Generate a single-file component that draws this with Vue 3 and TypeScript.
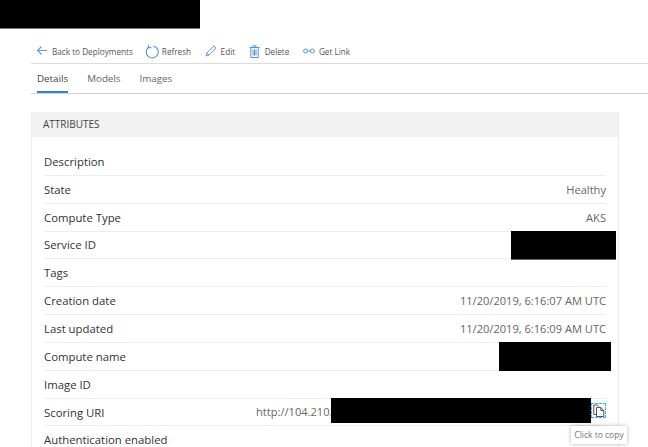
<script setup lang="ts">
interface Row { label: string; value?: string; redact?: 'service' | 'compute'; uri?: boolean }
const rows: Row[] = [
  { label: 'Description' },
  { label: 'State', value: 'Healthy' },
  { label: 'Compute Type', value: 'AKS' },
  { label: 'Service ID', redact: 'service' },
  { label: 'Tags' },
  { label: 'Creation date', value: '11/20/2019, 6:16:07 AM UTC' },
  { label: 'Last updated', value: '11/20/2019, 6:16:09 AM UTC' },
  { label: 'Compute name', redact: 'compute' },
  { label: 'Image ID' },
  { label: 'Scoring URI', uri: true },
  { label: 'Authentication enabled', value: 'true' },
]
</script>

<template>
  <div class="page">
    <div class="topblock"></div>
    <div class="content">
      <nav class="toolbar">
        <button class="tool back">
          <svg width="12" height="12" viewBox="0 0 12 12" fill="none" stroke="#5a9bd8" stroke-width="1.1"><path d="M4.500 1.500 0.500 5.500l4 4M0.500 5.500h9.500" /></svg>
          <span>Back to Deployments</span>
        </button>
        <button class="tool refresh">
          <svg width="14" height="15" viewBox="0 0 14 15" fill="none" stroke="#4f96d6" stroke-width="1.1"><path d="M3.600 3.200A6 6 0 1 0 8.600 2.100" /><path d="M3.400 0.800v2.800h2.800" /></svg>
          <span>Refresh</span>
        </button>
        <button class="tool edit">
          <svg width="12" height="12" viewBox="0 0 12 12" fill="none" stroke="#5a9bd8" stroke-width="1"><path d="M1 11l.8-3L9 .9l2.100 2.100L4 10.200z" /><path d="M1.800 8 4 10.200" /></svg>
          <span>Edit</span>
        </button>
        <button class="tool delete">
          <svg width="11" height="13" viewBox="0 0 11 13" fill="none" stroke="#4f96d6" stroke-width="1"><path d="M0.500 2.500h10M4 2.500V.8h3v1.700M1.800 2.500v10h7.400v-10M4 4.500v6M5.500 4.500v6M7 4.500v6" /></svg>
          <span>Delete</span>
        </button>
        <button class="tool link">
          <svg width="12" height="6" viewBox="0 0 12 6" fill="none" stroke="#4f96d6" stroke-width="1"><circle cx="2.600" cy="3" r="2" /><circle cx="9.400" cy="3" r="2" /><path d="M4.600 3h2.800" /></svg>
          <span>Get Link</span>
        </button>
      </nav>

      <div class="tabs">
        <div class="tab active">Details</div>
        <div class="tab">Models</div>
        <div class="tab">Images</div>
      </div>

      <section class="card">
        <header class="card-head">ATTRIBUTES</header>
        <div class="card-body">
          <div v-for="row in rows" :key="row.label" class="row">
            <span class="label">{{ row.label }}</span>
            <span v-if="row.value" class="value">{{ row.value }}</span>
            <span v-if="row.redact" class="redact" :class="row.redact"></span>
            <span v-if="row.uri" class="uri">
              <span class="value">http://104.210.</span>
              <span class="redact uriblock"></span>
              <span class="copy">
                <svg width="12" height="13" viewBox="0 0 12 13" fill="none" stroke="#555" stroke-width="1"><path d="M3.500 10.500H.8V1h3.700l1.500 1.500" /><path d="M3.500 3.500h4.300l3 3v6H3.500z" /><path d="M7.800 3.500v3h3" /></svg>
              </span>
              <span class="tooltip">Click to copy</span>
            </span>
          </div>
        </div>
      </section>
    </div>
  </div>
</template>

<style>
html, body { margin: 0; background: #fff; overflow: hidden; }
</style>

<style scoped>
.page {
  width: 648px;
  height: 447px;
  overflow: hidden;
  font-family: "Open Sans", "Noto Sans", sans-serif;
  color: #333;
  background: #fff;
}
.topblock { width: 200px; height: 29px; background: #000; border-bottom: 1px solid #777; box-sizing: border-box; }
.content { margin-left: 31px; width: 617px; }
.toolbar {
  height: 35px;
  box-sizing: border-box;
  padding: 10px 0 0 6px;
  display: flex;
  align-items: center;
  border-bottom: 1px solid #dcdcdc;
}
.tool {
  display: flex;
  align-items: center;
  border: 0;
  background: none;
  padding: 0;
  font: inherit;
  font-size: 8.200px;
  color: #555;
  gap: 4px;
  margin-right: 13.500px;
}
.back { gap: 3px; margin-right: 12px; }
.refresh { gap: 3px; }
.delete { gap: 5px; }
.tabs {
  display: flex;
  height: 30px;
  box-sizing: border-box;
  border-bottom: 1px solid #d2d2d2;
  padding-left: 6px;
  gap: 19px;
}
.tab { font-size: 9.800px; color: #666; line-height: 29px; height: 29px; box-sizing: border-box; }
.tab.active { color: #444; border-bottom: 2px solid #2f86d4; font-weight: 500; }
.card { margin-top: 18px; width: 588px; border: 1px solid #eee; border-top: 0; box-sizing: border-box; }
.card-head {
  height: 25px;
  background: #f2f2f2;
  font-size: 10px;
  line-height: 25px;
  padding-left: 11px;
  color: #444;
}
.card-body { padding: 11px 12px 0; }
.row {
  position: relative;
  height: 27.850px;
  box-sizing: border-box;
  border-bottom: 1px solid #eee;
  display: flex;
  justify-content: space-between;
  align-items: center;
  font-size: 11.350px;
}
.label { color: #333; }
.value { color: #666; font-size: 11.100px; }
.redact { background: #000; position: absolute; }
.service { left: 467px; width: 105px; top: -1px; height: 29px; border-bottom: 1px solid #666; box-sizing: border-box; }
.compute { left: 455px; width: 112px; top: -1px; height: 29px; }
.uri { position: absolute; left: 212px; right: 0; top: -1px; bottom: 1px; display: flex; align-items: center; }
.uriblock { left: 75px; width: 260px; top: 0; height: 25px; }
.copy {
  position: absolute;
  left: 336px;
  top: 6px;
  width: 13px;
  height: 13px;
  outline: 1px dashed #35b5e5;
  display: flex;
  align-items: center;
  justify-content: center;
}
.tooltip {
  position: absolute;
  left: 315px;
  top: 28px;
  width: 56px;
  height: 18px;
  background: #fff;
  box-shadow: 0 0 4px rgba(0, 0, 0, 0.3);
  font-size: 8.500px;
  line-height: 18px;
  text-align: center;
  color: #777;
  white-space: nowrap;
  z-index: 2;
}
</style>
